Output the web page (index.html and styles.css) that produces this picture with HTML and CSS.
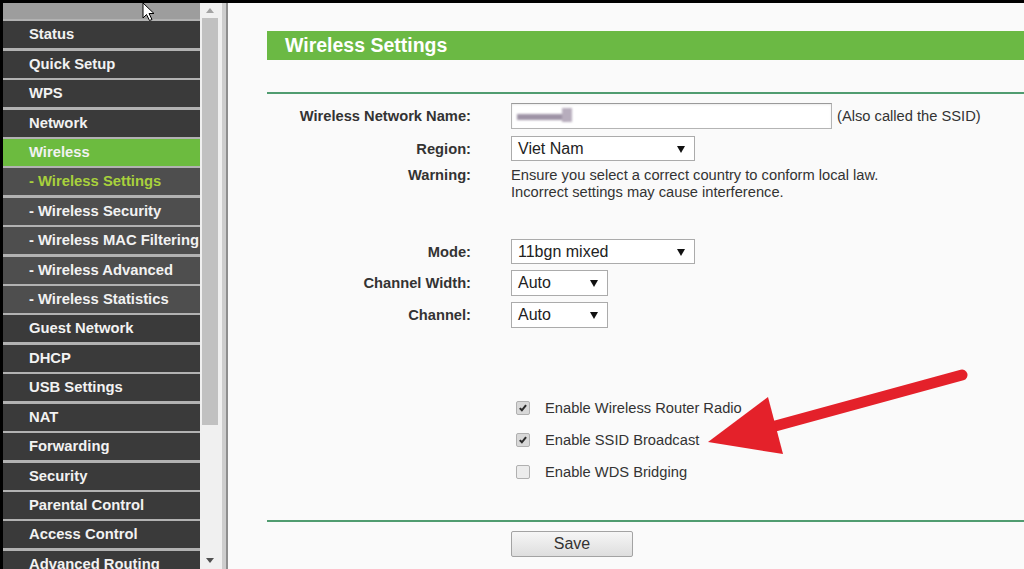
FILE: index.html
```html
<!DOCTYPE html>
<html lang="en">
<head>
    <meta charset="UTF-8">
    <meta name="viewport" content="width=device-width, initial-scale=1.0">
    <title>Wireless Settings</title>
    <link rel="stylesheet" href="styles.css">
</head>
<body>
    <div class="screen">
        <div class="menu">
            <div class="menu-top"></div>
            <a class="menu-item">Status</a>
            <a class="menu-item">Quick Setup</a>
            <a class="menu-item">WPS</a>
            <a class="menu-item">Network</a>
            <a class="menu-item active">Wireless</a>
            <a class="menu-item sub current">- Wireless Settings</a>
            <a class="menu-item sub">- Wireless Security</a>
            <a class="menu-item sub">- Wireless MAC Filtering</a>
            <a class="menu-item sub">- Wireless Advanced</a>
            <a class="menu-item sub">- Wireless Statistics</a>
            <a class="menu-item">Guest Network</a>
            <a class="menu-item">DHCP</a>
            <a class="menu-item">USB Settings</a>
            <a class="menu-item">NAT</a>
            <a class="menu-item">Forwarding</a>
            <a class="menu-item">Security</a>
            <a class="menu-item">Parental Control</a>
            <a class="menu-item">Access Control</a>
            <a class="menu-item">Advanced Routing</a>
        </div>

        <div class="scrollbar">
            <span class="scroll-btn"><i class="tri-up"></i></span>
            <div class="scroll-thumb"></div>
            <div class="scroll-track"></div>
            <span class="scroll-btn"><i class="tri-down"></i></span>
        </div>
        <div class="frame-border"></div>

        <div class="main">
            <h1 class="page-title">Wireless Settings</h1>
            <hr class="rule">

            <form class="settings">
                <div class="row row-name">
                    <label>Wireless Network Name:</label>
                    <div class="field">
                        <div class="text-input">
                            <span class="blur blur-a"></span>
                            <span class="blur blur-b"></span>
                        </div>
                        <span class="hint">(Also called the SSID)</span>
                    </div>
                </div>

                <div class="row row-region">
                    <label>Region:</label>
                    <div class="field">
                        <div class="select wide">Viet Nam</div>
                    </div>
                </div>

                <div class="row row-warning">
                    <label>Warning:</label>
                    <div class="field warning-text">
                        Ensure you select a correct country to conform local law.<br>
                        Incorrect settings may cause interference.
                    </div>
                </div>

                <div class="row row-mode">
                    <label>Mode:</label>
                    <div class="field">
                        <div class="select wide">11bgn mixed</div>
                    </div>
                </div>

                <div class="row row-small">
                    <label>Channel Width:</label>
                    <div class="field">
                        <div class="select narrow">Auto</div>
                    </div>
                </div>

                <div class="row row-small">
                    <label>Channel:</label>
                    <div class="field">
                        <div class="select narrow">Auto</div>
                    </div>
                </div>

                <div class="checks">
                    <div class="check-row first">
                        <span class="checkbox checked"><svg viewBox="0 0 13 13"><path d="M3 6.6 L5.3 9 L9.8 3.4" /></svg></span>
                        Enable Wireless Router Radio
                    </div>
                    <div class="check-row">
                        <span class="checkbox checked"><svg viewBox="0 0 13 13"><path d="M3 6.6 L5.3 9 L9.8 3.4" /></svg></span>
                        Enable SSID Broadcast
                    </div>
                    <div class="check-row">
                        <span class="checkbox"></span>
                        Enable WDS Bridging
                    </div>
                </div>

                <hr class="rule rule-bottom">

                <button type="button" class="btn-save">Save</button>
            </form>
        </div>
    </div>

    <!-- annotation arrow drawn over the screenshot -->
    <svg class="arrow" width="1024" height="569" viewBox="0 0 1024 569">
        <line x1="962" y1="375" x2="768" y2="428" stroke="#e4212a" stroke-width="11" stroke-linecap="round" />
        <polygon points="708,442 768,397 783,454" fill="#e4212a" />
    </svg>

    <!-- mouse pointer -->
    <svg class="cursor" width="14" height="20" viewBox="0 0 14 20">
        <path d="M1 1 L1 16 L4.5 12.5 L7.5 18.5 L10 17.5 L7 11.5 L12 11.5 Z" fill="#fff" stroke="#000" stroke-width="1" stroke-linejoin="round" />
    </svg>
</body>
</html>
```

FILE: styles.css
```css
body {
    margin: 0;
    background: #000;
    font-family: "Liberation Sans", Arial, sans-serif;
    overflow: hidden;
}
.screen {
    display: flex;
    height: 566px;
    padding: 3px 0 0 3px;
}

/* left menu frame */
.menu {
    width: 197px;
    display: flex;
    flex-direction: column;
    background: #b2b2b2;
    overflow: hidden;
}
.menu-top {
    height: 16px;
    flex-shrink: 0;
    background: #9d9d9d;
}
.menu-item {
    flex-shrink: 0;
    display: block;
    height: 27px;
    margin-top: 2.42px;
    padding-left: 26px;
    background: #3a3a3a;
    color: #f2f2f2;
    font-size: 14.8px;
    font-weight: bold;
    line-height: 27px;
    white-space: nowrap;
    text-decoration: none;
}
.menu-item.active {
    background: #6cbb3f;
}
.menu-item.sub {
    background: #4e4e4e;
}
.menu-item.current {
    color: #a8d13c;
}

.scrollbar {
    width: 22px;
    display: flex;
    flex-direction: column;
    background: #f0f0f0;
    padding: 0 4px 0 2px;
    box-sizing: border-box;
}
.scroll-btn {
    height: 15px;
    flex-shrink: 0;
    display: flex;
    align-items: center;
    justify-content: center;
}
.tri-up {
    border-left: 4px solid transparent;
    border-right: 4px solid transparent;
    border-bottom: 5px solid #a3a3a3;
}
.tri-down {
    margin-top: -2px;
    border-left: 4px solid transparent;
    border-right: 4px solid transparent;
    border-top: 5px solid #505050;
}
.scroll-thumb {
    height: 407px;
    flex-shrink: 0;
    background: #c1c1c1;
}
.scroll-track {
    flex: 1;
}
.frame-border {
    width: 4px;
    background: #cdcdcd;
    border-right: 2px solid #8e8e8e;
}

/* content frame */
.main {
    flex: 1;
    background: #fafafa;
    padding: 28px 0 0 39px;
    color: #333;
}
.page-title {
    margin: 0;
    height: 29px;
    padding-left: 18px;
    background: #6bb944;
    color: #fff;
    font-size: 19.5px;
    line-height: 29px;
}
.rule {
    border: none;
    height: 2px;
    margin: 32px 0 0;
    background: #509c70;
}

.row {
    display: flex;
    align-items: center;
}
.row label {
    width: 204px;
    margin-right: 40px;
    flex-shrink: 0;
    text-align: right;
    font-size: 14.7px;
    font-weight: bold;
}
.field {
    display: flex;
    align-items: center;
    font-size: 14.7px;
}
.row-name {
    margin-top: 9px;
    height: 26px;
}
.row-region {
    margin-top: 7px;
    height: 25px;
}
.row-warning {
    margin-top: 5.5px;
    align-items: flex-start;
    line-height: 17px;
}
.warning-text {
    display: block;
}
.row-mode {
    margin-top: 38.5px;
    height: 25px;
}
.row-small {
    margin-top: 6px;
    height: 26px;
}

.text-input {
    position: relative;
    width: 321px;
    height: 26px;
    box-sizing: border-box;
    background: #fff;
    border: 1px solid #b4b4b4;
    border-top-color: #9a9a9a;
    box-shadow: inset 0 1px 2px rgba(0,0,0,0.08);
}
.blur {
    position: absolute;
    filter: blur(1.2px);
}
.blur-a {
    left: 5px;
    top: 10px;
    width: 50px;
    height: 6px;
    background: #9e93a6;
}
.blur-b {
    left: 50px;
    top: 4px;
    width: 10px;
    height: 14px;
    background: #b7adbd;
}
.hint {
    margin-left: 5px;
}

.select {
    position: relative;
    height: 100%;
    box-sizing: border-box;
    padding-left: 6px;
    background: #fff;
    border: 1px solid #ababab;
    font-size: 16px;
    line-height: 23px;
    color: #222;
}
.select::after {
    content: "";
    position: absolute;
    right: 9px;
    top: 9px;
    border-left: 4px solid transparent;
    border-right: 4px solid transparent;
    border-top: 7px solid #111;
}
.select.wide {
    width: 184px;
}
.select.narrow {
    width: 97px;
}
.row-small .select {
    line-height: 24px;
}

.checks {
    margin-left: 249px;
}
.check-row {
    display: flex;
    align-items: center;
    height: 20px;
    margin-top: 12px;
    font-size: 14.7px;
}
.check-row.first {
    margin-top: 70px;
}
.checkbox {
    width: 14px;
    height: 14px;
    margin-right: 15px;
    box-sizing: border-box;
    border: 1px solid #b0b0b0;
    border-radius: 2px;
    background: #ececec;
}
.checkbox.checked {
    background: #d8d8d8;
}
.checkbox svg {
    display: block;
    width: 12px;
    height: 12px;
    fill: none;
    stroke: #2a2a2a;
    stroke-width: 2.2;
}

.rule-bottom {
    margin-top: 38px;
}
.btn-save {
    display: block;
    margin: 9px 0 0 244px;
    width: 122px;
    height: 26px;
    border: 1px solid #a3a3a3;
    border-radius: 2px;
    background: linear-gradient(#f6f6f6, #dedede);
    color: #333;
    font-family: "Liberation Sans", Arial, sans-serif;
    font-size: 16px;
}

.arrow {
    position: absolute;
    left: 0;
    top: 0;
    pointer-events: none;
}
.cursor {
    position: absolute;
    left: 142px;
    top: 2px;
}
```
